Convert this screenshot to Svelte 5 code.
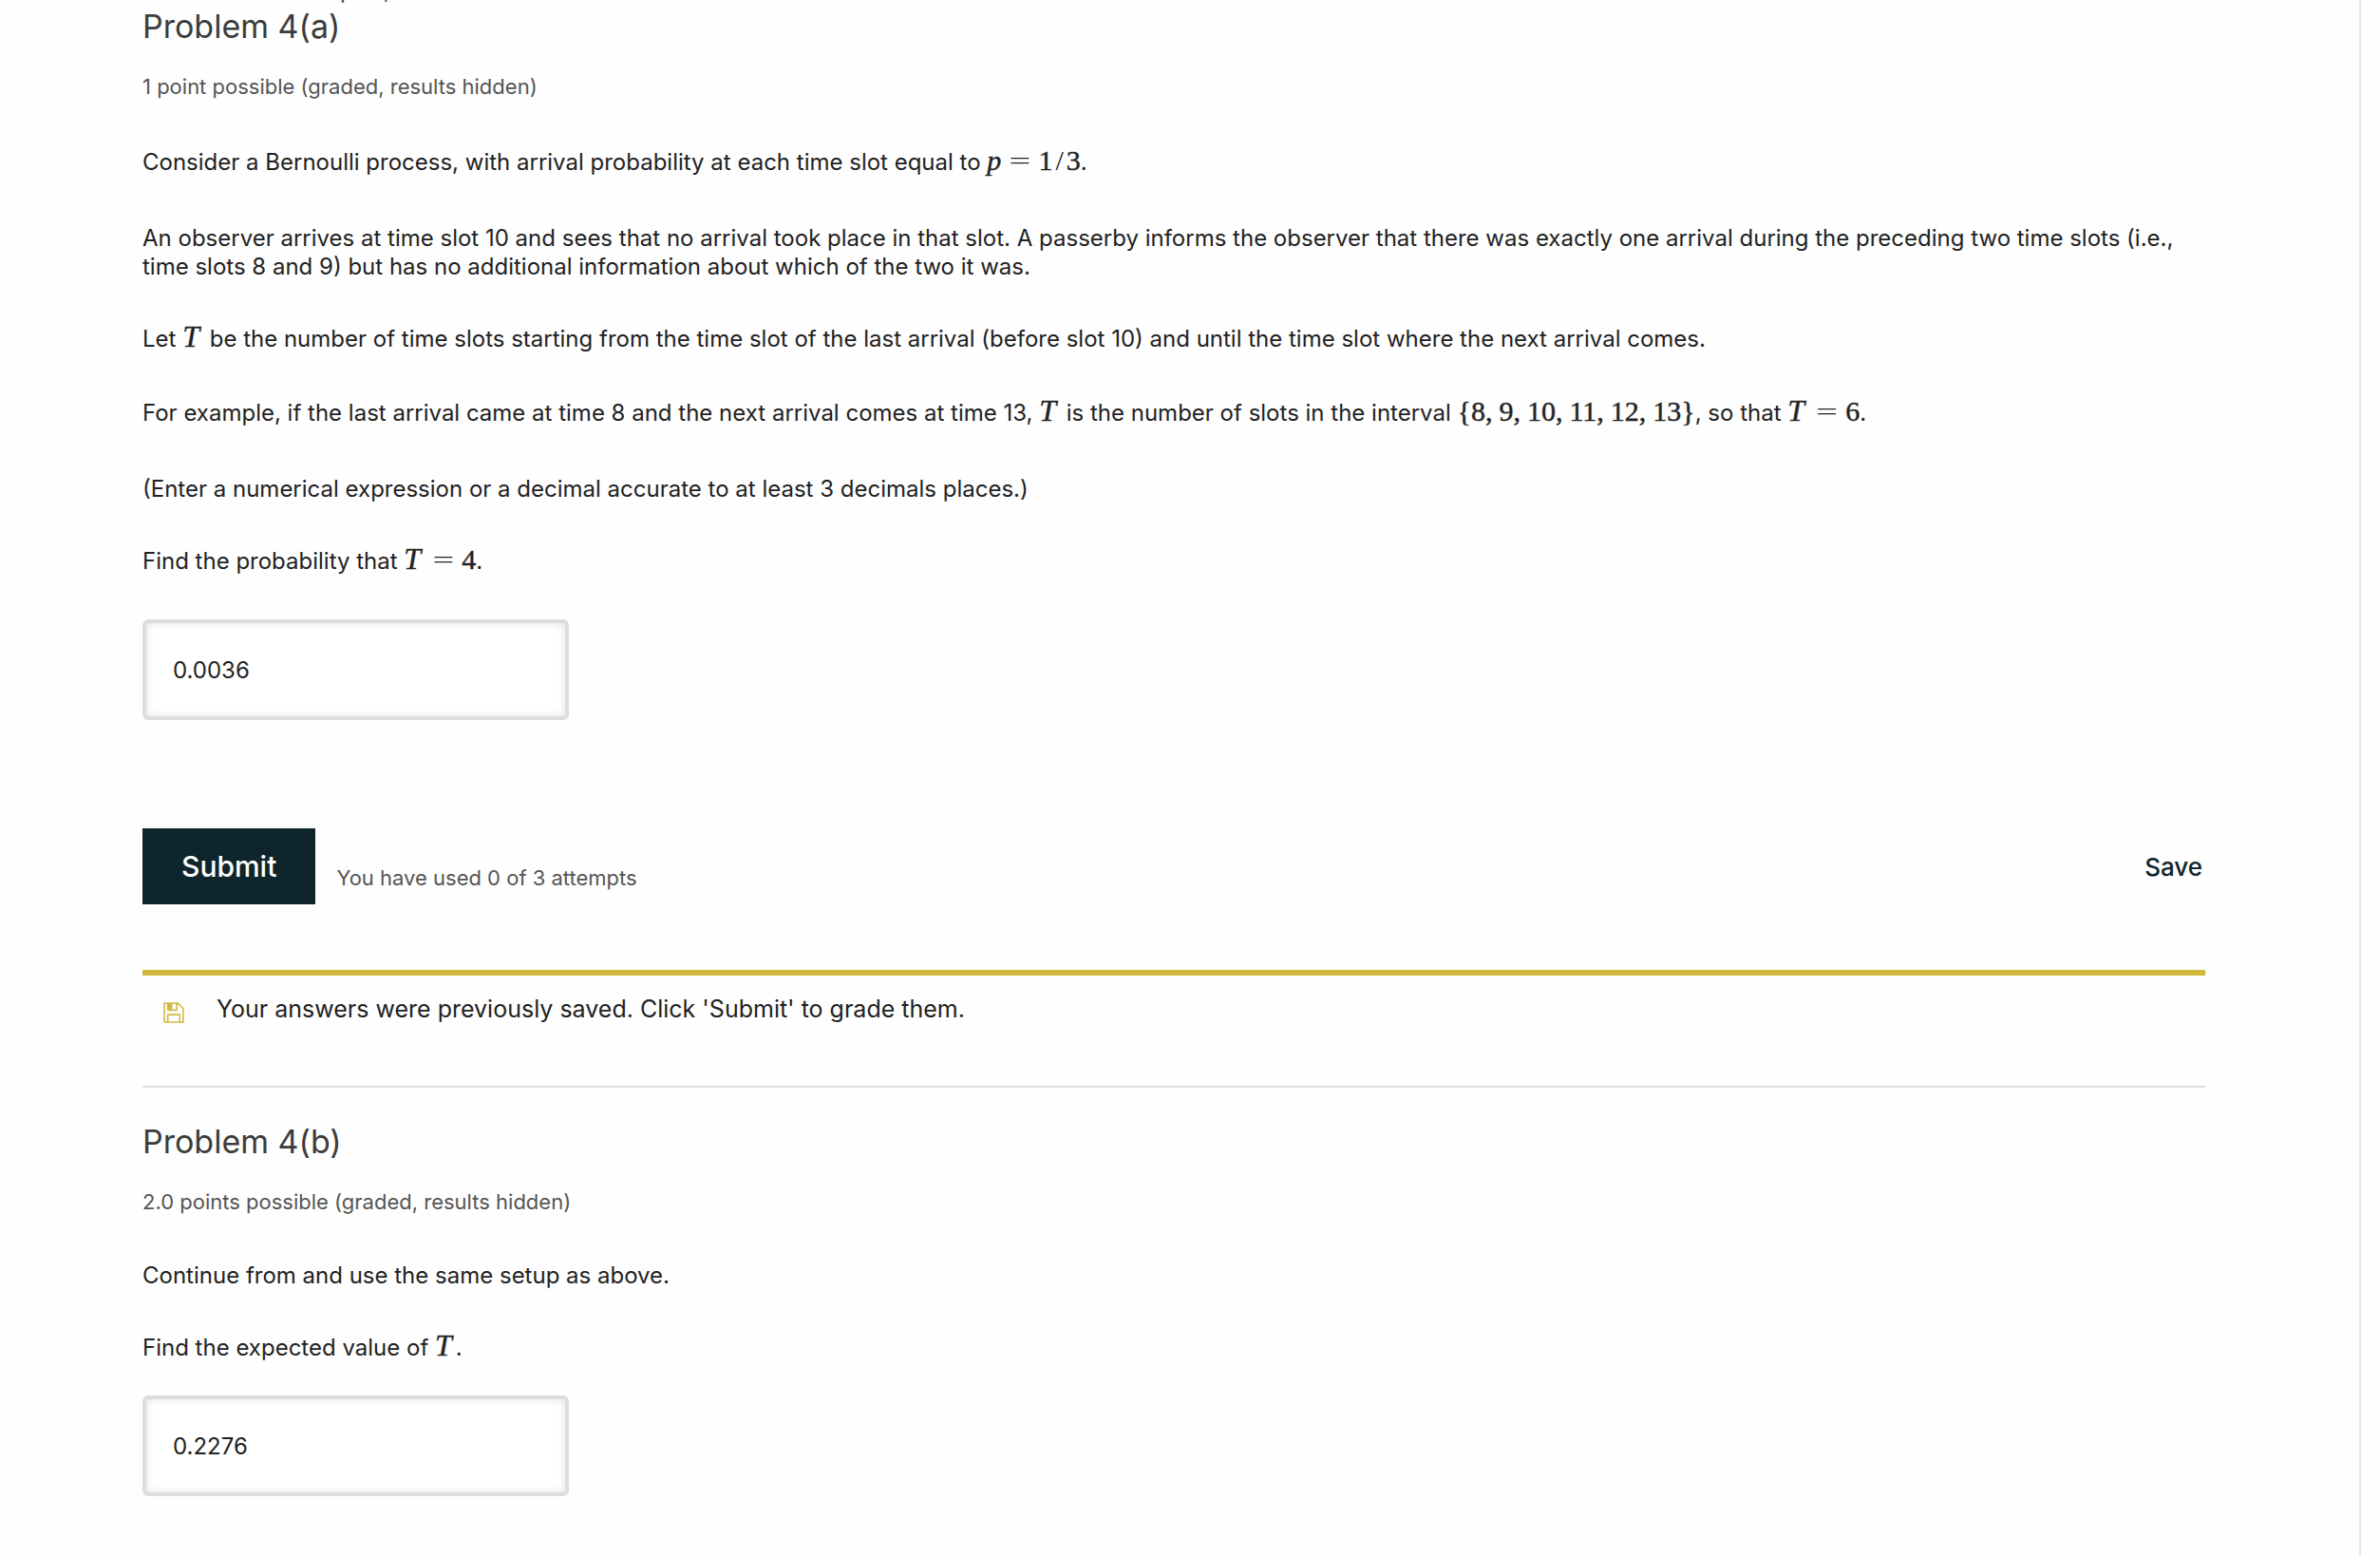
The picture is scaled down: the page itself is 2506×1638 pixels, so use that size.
<script lang="ts">
  let answerA = $state('0.0036');
  let answerB = $state('0.2276');
  let attemptsUsed = $state(0);
  const attemptsAllowed = 3;
  const interval = [8, 9, 10, 11, 12, 13];

  function submit(event: SubmitEvent) {
    event.preventDefault();
    if (attemptsUsed < attemptsAllowed) attemptsUsed += 1;
  }
</script>

<main class="sequence">
  <div class="due"><span>Final Exam due Sep 12,</span></div>

  <form class="problem" onsubmit={submit}>
    <h3>Problem 4(a)</h3>
    <div class="progress">1 point possible (graded, results hidden)</div>

    <p class="tall">
      Consider a Bernoulli process, with arrival probability at each time slot equal to
      <span class="math"><i>p</i><span class="rel">=</span>1<span class="slash">/</span>3</span>.
    </p>
    <p>
      An observer arrives at time slot 10 and sees that no arrival took place in that slot. A
      passerby informs the observer that there was exactly one arrival during the preceding two time
      slots (i.e., time slots 8 and 9) but has no additional information about which of the two it
      was.
    </p>
    <p>
      Let <span class="math"><i class="cap">T</i></span> be the number of time slots starting from the
      time slot of the last arrival (before slot 10) and until the time slot where the next arrival
      comes.
    </p>
    <p class="tall">
      For example, if the last arrival came at time 8 and the next arrival comes at time 13,
      <span class="math"><i class="cap">T</i></span> is the number of slots in the interval
      <span class="math">&lbrace;{#each interval as slot, i}{slot}{#if i < interval.length - 1}<span class="punct">,</span>{/if}{/each}&rbrace;</span>, so that
      <span class="math"><i class="cap">T</i><span class="rel">=</span>6</span>.
    </p>
    <p>(Enter a numerical expression or a decimal accurate to at least 3 decimals places.)</p>
    <p>
      <label for="answer-a">
        Find the probability that
        <span class="math"><i class="cap">T</i><span class="rel">=</span>4</span>.
      </label>
    </p>
    <input id="answer-a" class="answer" type="text" bind:value={answerA} />

    <div class="action">
      <button class="submit" type="submit">Submit</button>
      <span class="feedback">You have used {attemptsUsed} of {attemptsAllowed} attempts</span>
      <button class="save" type="button">Save</button>
    </div>

    <div class="notification">
      <svg class="save-icon" viewBox="0 0 21 21" aria-hidden="true">
        <path
          fill="none"
          stroke="currentColor"
          stroke-width="1.5"
          stroke-linejoin="round"
          d="M1 1h13.500l5.500 5.500V20H1z M4.500 20v-7.500h12V20 M4.500 1v7h9V1"
        />
        <path fill="currentColor" d="M4.500 1h4.500v7H4.500z" />
      </svg>
      <span>Your answers were previously saved. Click 'Submit' to grade them.</span>
    </div>
  </form>

  <form class="problem" onsubmit={submit}>
    <h3>Problem 4(b)</h3>
    <div class="progress">2.0 points possible (graded, results hidden)</div>

    <p>Continue from and use the same setup as above.</p>
    <p class="snug">
      <label for="answer-b">
        Find the expected value of <span class="math"><i class="cap">T</i></span>.
      </label>
    </p>
    <input id="answer-b" class="answer" type="text" bind:value={answerB} />
  </form>
</main>

<style>
  :global(body) {
    background: #fefefe;
  }

  .sequence {
    box-sizing: border-box;
    min-height: 100vh;
    margin-right: 20px;
    padding: 0 162px 64px 150px;
    border-right: 2px solid #e7e7e7;
    font-family: Inter, 'Liberation Sans', sans-serif;
    font-size: 24px;
    line-height: 30px;
    color: #222;
  }

  /* due date line, mostly scrolled off the top */
  .due {
    display: flex;
    align-items: flex-end;
    height: 4px;
    overflow: hidden;
    line-height: 28px;
    color: #454545;
  }

  .problem + .problem {
    margin-top: 46px;
    padding-top: 33px;
    border-top: 2px solid #ddd;
  }

  h3 {
    margin: 0 0 24px;
    font-size: 34px;
    font-weight: 400;
    line-height: 48px;
    color: #3c3c3c;
  }

  .progress {
    margin-bottom: 48px;
    font-size: 22px;
    line-height: 30px;
    color: #555;
  }

  p {
    margin: 0 0 46px;
  }

  .tall {
    margin-bottom: 48px;
    line-height: 34px;
  }

  .snug {
    margin-bottom: 35px;
  }

  .math {
    font-family: 'Liberation Serif', serif;
    font-size: 30px;
    line-height: 0;
    white-space: nowrap;
    -webkit-text-stroke: 1px rgba(34, 34, 34, 0.45);
  }

  .cap {
    padding-right: 4px;
    font-size: 32px;
  }

  .rel {
    padding: 0 7px;
    font-family: 'DejaVu Sans Light', 'DejaVu Sans', sans-serif;
    font-weight: 200;
    -webkit-text-stroke: 0;
  }

  .slash {
    padding: 0 3px;
    -webkit-text-stroke: 0;
  }

  .punct {
    padding-right: 7px;
  }

  .answer {
    display: block;
    box-sizing: border-box;
    width: 449px;
    height: 106px;
    padding: 0 28px;
    border: 4px solid #ddd;
    border-radius: 6px;
    background: #fff;
    box-shadow: inset 0 0 8px rgba(0, 0, 0, 0.12);
    font: inherit;
    color: #222;
  }

  .action {
    display: flex;
    align-items: center;
    margin-top: 114px;
  }

  .submit,
  .save {
    border: 0;
    font-family: inherit;
    font-weight: 500;
    cursor: pointer;
  }

  .submit {
    height: 80px;
    padding: 0 41px;
    background: #0d252b;
    font-size: 30px;
    color: #fff;
  }

  .feedback {
    margin-left: 22px;
    padding-top: 24px;
    font-size: 22px;
    color: #555;
  }

  .save {
    margin-left: auto;
    padding: 0 3px;
    background: none;
    font-size: 26px;
    color: #0d252b;
  }

  .notification {
    display: flex;
    align-items: flex-end;
    gap: 34px;
    margin-top: 69px;
    padding: 20px 22px;
    border-top: 6px solid #d2b73e;
    font-size: 25px;
  }

  .save-icon {
    width: 22px;
    height: 22px;
    color: #d2b73e;
  }
</style>
